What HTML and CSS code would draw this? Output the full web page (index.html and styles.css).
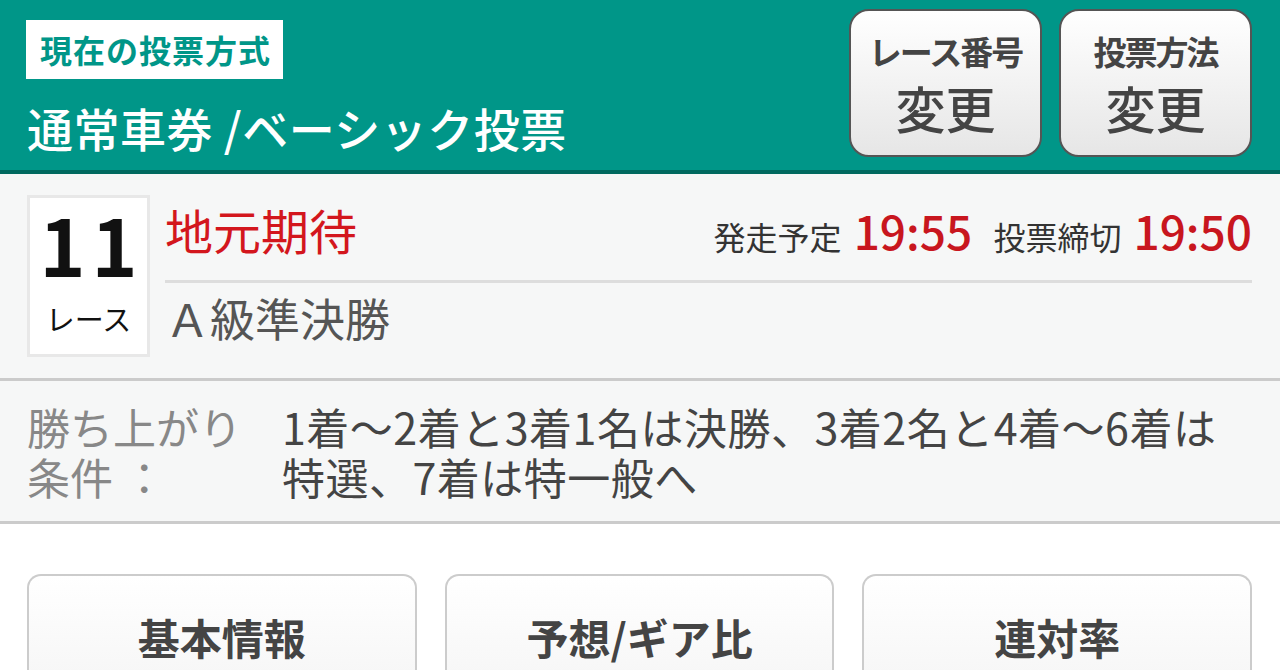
FILE: index.html
```html
<!DOCTYPE html>
<html lang="ja">
<head>
<meta charset="utf-8">
<link rel="stylesheet" href="styles.css">
</head>
<body>
<header class="header">
  <div class="header-left">
    <div class="mode-label">現在の投票方式</div>
    <div class="mode-title">通常車券 /ベーシック投票</div>
  </div>
  <div class="header-buttons">
    <div class="hbtn"><span class="hbtn-top">レース番号</span><span class="hbtn-main">変更</span></div>
    <div class="hbtn"><span class="hbtn-top">投票方法</span><span class="hbtn-main">変更</span></div>
  </div>
</header>
<section class="race">
  <div class="race-no">
    <div class="race-num">11</div>
    <div class="race-unit">レース</div>
  </div>
  <div class="race-main">
    <div class="race-top">
      <div class="race-name">地元期待</div>
      <div class="race-times">
        <span class="t-label">発走予定</span><span class="t-val">19:55</span>
        <span class="t-label">投票締切</span><span class="t-val">19:50</span>
      </div>
    </div>
    <div class="race-class">Ａ級準決勝</div>
  </div>
</section>
<section class="cond">
  <div class="cond-label">勝ち上がり条件 ：</div>
  <div class="cond-text">1着〜2着と3着1名は決勝、3着2名と4着〜6着は特選、7着は特一般へ</div>
</section>
<nav class="tabs">
  <div class="tab">基本情報</div>
  <div class="tab">予想/ギア比</div>
  <div class="tab">連対率</div>
</nav>
</body>
</html>
```

FILE: styles.css
```css
* { box-sizing: border-box; }
html, body {
  margin: 0;
  padding: 0;
  width: 1280px;
  height: 670px;
  overflow: hidden;
  background: #ffffff;
  font-family: "Noto Sans CJK JP", "Noto Sans", sans-serif;
}
.header {
  height: 174px;
  background: #009688;
  border-bottom: 4px solid #00695f;
  display: flex;
  justify-content: space-between;
  padding: 0 28px 0 26px;
}
.header-left {
  padding-top: 20px;
}
.mode-label {
  display: inline-block;
  background: #ffffff;
  color: #009688;
  font-size: 32px;
  font-weight: 700;
  height: 59px;
  line-height: 59px;
  padding: 0 12px 0 14px;
  letter-spacing: 1px;
}
.mode-title {
  color: #ffffff;
  font-size: 46px;
  font-weight: 500;
  line-height: 56px;
  margin-top: 20px;
  margin-left: 1px;
  letter-spacing: 0.5px;
}
.header-buttons {
  display: flex;
  gap: 17px;
  padding-top: 9px;
}
.hbtn {
  width: 193px;
  height: 148px;
  border: 2px solid #555555;
  border-radius: 20px;
  background: linear-gradient(#ffffff, #e6e6e6);
  display: flex;
  flex-direction: column;
  align-items: center;
  color: #444444;
  font-weight: 700;
}
.hbtn-top {
  font-size: 33px;
  line-height: 33px;
  margin-top: 24px;
  letter-spacing: -2px;
}
.hbtn-main {
  font-size: 50px;
  line-height: 50px;
  margin-top: 14px;
  font-weight: 500;
}
.race {
  background: #f6f7f7;
  height: 207px;
  border-bottom: 3px solid #cbcbcb;
  display: flex;
  padding: 21px 28px 0 27px;
}
.race-no {
  width: 123px;
  height: 162px;
  background: #ffffff;
  border: 3px solid #e8e8e8;
  display: flex;
  flex-direction: column;
  align-items: center;
}
.race-num {
  font-size: 78px;
  font-weight: 700;
  line-height: 80px;
  color: #111111;
  margin-top: 5px;
  letter-spacing: 6px;
  margin-left: 6px;
}
.race-unit {
  font-size: 29px;
  line-height: 40px;
  color: #111111;
  margin-top: 15px;
}
.race-main {
  flex: 1;
  margin-left: 15px;
  display: flex;
  flex-direction: column;
}
.race-top {
  display: flex;
  justify-content: space-between;
  align-items: baseline;
  border-bottom: 3px solid #dddddd;
  height: 88px;
}
.race-name {
  color: #d3161d;
  font-size: 48px;
  line-height: 60px;
  margin-top: 4px;
}
.race-times {
  color: #333333;
  font-size: 32px;
}
.t-label {
  margin-left: 14px;
}
.t-val {
  color: #c8161e;
  font-size: 46px;
  font-weight: 500;
  margin-left: 12px;
}
.race-class {
  color: #555555;
  font-size: 45px;
  line-height: 56px;
  margin-top: 7px;
}
.cond {
  background: #f6f7f7;
  height: 143px;
  border-bottom: 3px solid #cbcbcb;
  display: flex;
  padding: 20px 40px 0 27px;
  font-size: 43px;
  line-height: 50px;
}
.cond-label {
  color: #888888;
  width: 232px;
  margin-right: 23px;
  flex: none;
}
.cond-text {
  color: #444444;
  flex: 1;
  max-width: 955px;
  letter-spacing: 0.5px;
}
.tabs {
  display: flex;
  gap: 28px;
  padding: 50px 28px 0 27px;
}
.tab {
  flex: 1;
  height: 99px;
  border: 2px solid #cccccc;
  border-bottom: none;
  border-radius: 14px 14px 0 0;
  background: linear-gradient(#ffffff, #f7f7f7);
  color: #444444;
  font-size: 42px;
  font-weight: 700;
  text-align: center;
  padding-top: 33px;
  line-height: 56px;
}
```
